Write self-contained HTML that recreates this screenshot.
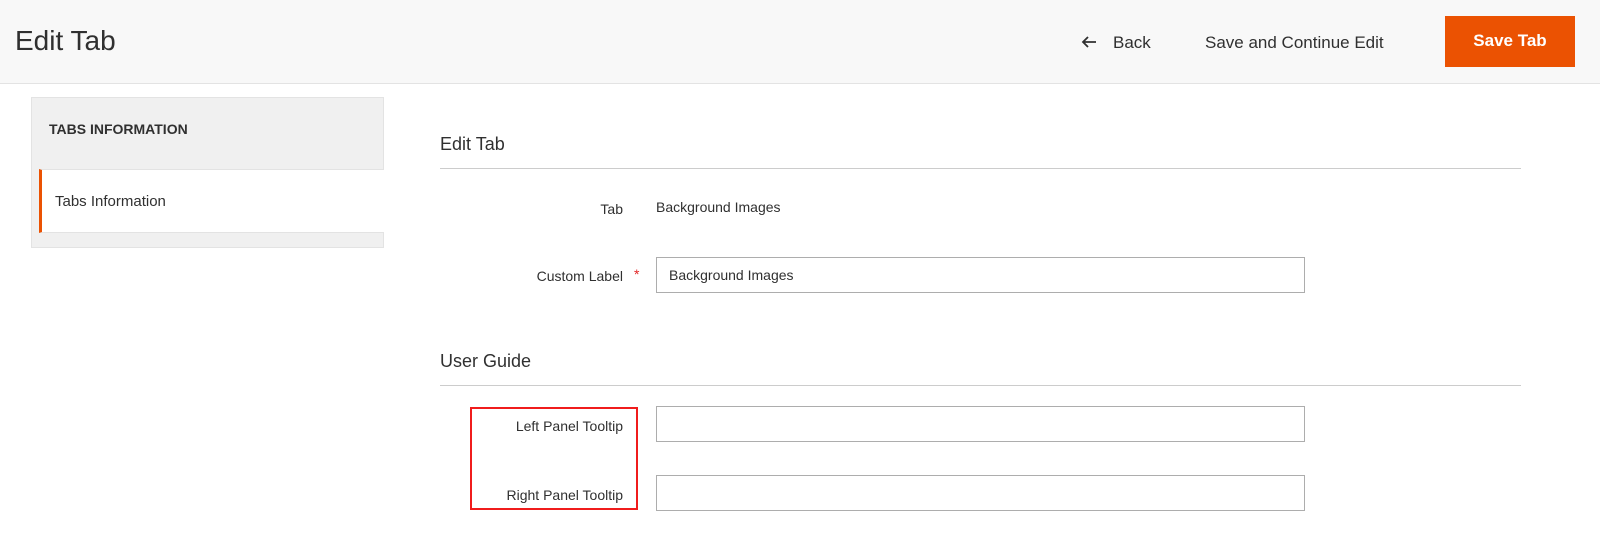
<!DOCTYPE html>
<html><head><style>
*{box-sizing:border-box;margin:0;padding:0}
body{width:1600px;height:554px;background:#fff;font-family:"Liberation Sans",sans-serif;color:#303030;position:relative;overflow:hidden}
.a{position:absolute;white-space:nowrap}
.hdr{left:0;top:0;width:1600px;height:84px;background:#f8f8f8;border-bottom:1px solid #e3e3e3}
.inp{position:absolute;left:656px;width:649px;height:36px;border:1px solid #adadad;background:#fff;font-size:14px;padding:9px 12px;color:#303030}
.lbl{font-size:14px;text-align:right;width:200px}
</style></head><body>
<div class="a hdr"></div>
<div class="a" style="left:15px;top:25px;font-size:28px;color:#303030">Edit Tab</div>
<svg class="a" style="left:1080px;top:34px" width="18" height="16" viewBox="0 0 18 16"><path d="M16 8H3M8 3L3 8l5 5" stroke="#303030" stroke-width="1.8" fill="none"/></svg>
<div class="a" style="left:1113px;top:33px;font-size:17px">Back</div>
<div class="a" style="left:1205px;top:33px;font-size:17px">Save and Continue Edit</div>
<div class="a" style="left:1445px;top:16px;width:130px;height:51px;background:#eb5202;color:#fff;font-size:17px;font-weight:bold;text-align:center;line-height:50px">Save Tab</div>

<div class="a" style="left:31px;top:97px;width:353px;height:151px;background:#f0f0f0;border:1px solid #e3e3e3"></div>
<div class="a" style="left:49px;top:121px;font-size:14px;font-weight:bold;color:#303030">TABS INFORMATION</div>
<div class="a" style="left:39px;top:169px;width:345px;height:64px;background:#fff;border-left:3px solid #eb5202;border-top:1px solid #e3e3e3;border-bottom:1px solid #e3e3e3"></div>
<div class="a" style="left:55px;top:193px;font-size:15px">Tabs Information</div>

<div class="a" style="left:440px;top:134px;font-size:18px">Edit Tab</div>
<div class="a" style="left:440px;top:168px;width:1081px;height:1px;background:#ccc"></div>
<div class="a lbl" style="left:423px;top:201px">Tab</div>
<div class="a" style="left:656px;top:199px;font-size:14px">Background Images</div>
<div class="a lbl" style="left:423px;top:268px">Custom Label</div>
<div class="a" style="left:634px;top:266px;color:#e22626;font-size:14px">*</div>
<div class="inp" style="top:257px">Background Images</div>

<div class="a" style="left:440px;top:351px;font-size:18px">User Guide</div>
<div class="a" style="left:440px;top:385px;width:1081px;height:1px;background:#ccc"></div>
<div class="a lbl" style="left:423px;top:418px">Left Panel Tooltip</div>
<div class="inp" style="top:406px"></div>
<div class="a lbl" style="left:423px;top:487px">Right Panel Tooltip</div>
<div class="inp" style="top:475px"></div>
<div class="a" style="left:470px;top:407px;width:168px;height:103px;border:2px solid #f01c1c"></div>
</body></html>
